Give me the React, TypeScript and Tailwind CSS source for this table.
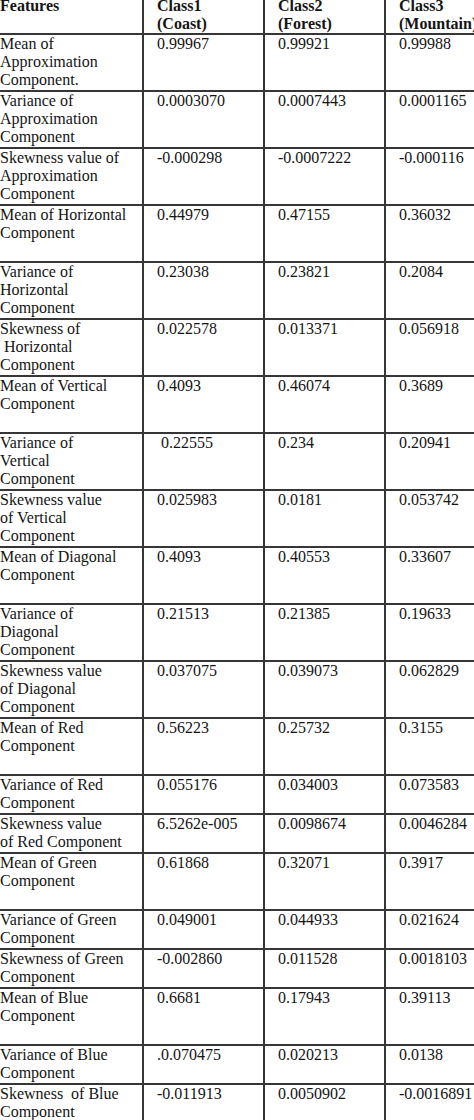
type Row = {
  feature: string
  c1: string
  c2: string
  c3: string
  tall: boolean
}

const rows: Row[] = [
  { feature: 'Mean of\nApproximation\nComponent.', c1: '0.99967', c2: '0.99921', c3: '0.99988', tall: true },
  { feature: 'Variance of\nApproximation\nComponent', c1: '0.0003070', c2: '0.0007443', c3: '0.0001165', tall: true },
  { feature: 'Skewness value of\nApproximation\nComponent', c1: '-0.000298', c2: '-0.0007222', c3: '-0.000116', tall: true },
  { feature: 'Mean of Horizontal\nComponent', c1: '0.44979', c2: '0.47155', c3: '0.36032', tall: true },
  { feature: 'Variance of\nHorizontal\nComponent', c1: '0.23038', c2: '0.23821', c3: '0.2084', tall: true },
  { feature: 'Skewness of\n Horizontal\nComponent', c1: '0.022578', c2: '0.013371', c3: '0.056918', tall: true },
  { feature: 'Mean of Vertical\nComponent', c1: '0.4093', c2: '0.46074', c3: '0.3689', tall: true },
  { feature: 'Variance of\nVertical\nComponent', c1: ' 0.22555', c2: '0.234', c3: '0.20941', tall: true },
  { feature: 'Skewness value\nof Vertical\nComponent', c1: '0.025983', c2: '0.0181', c3: '0.053742', tall: true },
  { feature: 'Mean of Diagonal\nComponent', c1: '0.4093', c2: '0.40553', c3: '0.33607', tall: true },
  { feature: 'Variance of\nDiagonal\nComponent', c1: '0.21513', c2: '0.21385', c3: '0.19633', tall: true },
  { feature: 'Skewness value\nof Diagonal\nComponent', c1: '0.037075', c2: '0.039073', c3: '0.062829', tall: true },
  { feature: 'Mean of Red\nComponent', c1: '0.56223', c2: '0.25732', c3: '0.3155', tall: true },
  { feature: 'Variance of Red\nComponent', c1: '0.055176', c2: '0.034003', c3: '0.073583', tall: false },
  { feature: 'Skewness value\nof Red Component', c1: '6.5262e-005', c2: '0.0098674', c3: '0.0046284', tall: false },
  { feature: 'Mean of Green\nComponent', c1: '0.61868', c2: '0.32071', c3: '0.3917', tall: true },
  { feature: 'Variance of Green\nComponent', c1: '0.049001', c2: '0.044933', c3: '0.021624', tall: false },
  { feature: 'Skewness of Green\nComponent', c1: '-0.002860', c2: '0.011528', c3: '0.0018103', tall: false },
  { feature: 'Mean of Blue\nComponent', c1: '0.6681', c2: '0.17943', c3: '0.39113', tall: true },
  { feature: 'Variance of Blue\nComponent', c1: '.0.070475', c2: '0.020213', c3: '0.0138', tall: false },
  { feature: 'Skewness  of Blue\nComponent', c1: '-0.011913', c2: '0.0050902', c3: '-0.0016891', tall: false },
]

const headers = ['Features', 'Class1\n(Coast)', 'Class2\n(Forest)', 'Class3\n(Mountain)']

export default function App() {
  return (
    <div className="w-[474px] h-[1120px] overflow-hidden bg-white text-[#141414] font-['Liberation_Serif','Times_New_Roman',serif] text-[16px] leading-[18px]">
      <div className="w-[520px] grid grid-cols-[142px_119px_119px_134px] gap-[2px] bg-[#363636]">
        {/* Header */}
        {headers.map((h, i) => (
          <div key={h} className={`bg-white h-[33px] overflow-hidden font-bold ${i === 0 ? 'pl-0' : 'pl-[13px]'}`}>
            <div className="-mt-[3px] whitespace-pre">{h}</div>
          </div>
        ))}

        {/* Body */}
        {rows.map((r) => {
          const h = r.tall ? 'h-[55px]' : 'h-[37px]'
          return [
            <div key={r.feature} className={`bg-white ${h} overflow-hidden whitespace-pre`}>
              {r.feature}
            </div>,
            ...[r.c1, r.c2, r.c3].map((v, j) => (
              <div key={r.feature + j} className={`bg-white ${h} overflow-hidden whitespace-pre pl-[13px]`}>
                {v}
              </div>
            )),
          ]
        })}
      </div>
    </div>
  )
}
